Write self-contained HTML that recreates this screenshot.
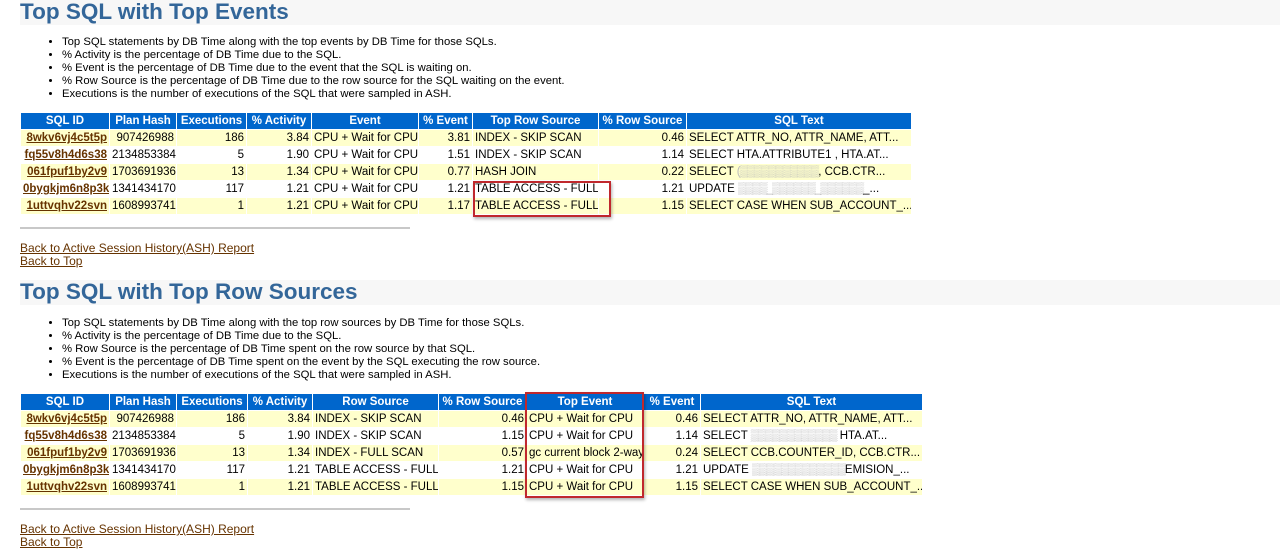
<!DOCTYPE html>
<html><head><meta charset="utf-8"><style>
body{margin:0;width:1280px;height:548px;background:#fff;font-family:"Liberation Sans",Arial,sans-serif;position:relative;overflow:hidden;color:#000}
.title{position:absolute;left:20px;width:1260px;height:25px;background:#f7f7f7;color:#336699;font-weight:bold;font-size:22.5px;line-height:24px}
ul{position:absolute;left:46px;margin:0;padding:0 0 0 16px;font-size:11.3px;line-height:13px;list-style:disc}
table{position:absolute;left:20px;border-collapse:separate;border-spacing:1px;font-size:11.5px;table-layout:fixed}
th{background:#0066cc;color:#fff;font-weight:bold;height:16px;padding:0 2px;white-space:nowrap;overflow:hidden;line-height:16px}
td{height:16px;padding:0 2px;white-space:nowrap;overflow:hidden;line-height:16px}
tr.a td{background:#ffffcc}
tr.b td{background:#fff}
.r{text-align:right}.c{text-align:center}
a{color:#663300;text-decoration:underline;font-weight:bold}
.lnk{position:absolute;left:20px;font-size:12px;line-height:13px}
.lnk a{font-weight:normal;color:#663300}
hr{position:absolute;left:20px;width:390px;margin:0;border:0;border-top:2px solid #c8c8c8}
.box{position:absolute;border:2px solid #c0282d;box-shadow:1px 2px 3px rgba(0,0,0,.3)}
.blur{color:#bbb;letter-spacing:-1px}
</style></head><body>
<div class="title" style="top:0">Top SQL with Top Events</div>
<ul style="top:36px">
<li>Top SQL statements by DB Time along with the top events by DB Time for those SQLs.</li>
<li>% Activity is the percentage of DB Time due to the SQL.</li>
<li>% Event is the percentage of DB Time due to the event that the SQL is waiting on.</li>
<li>% Row Source is the percentage of DB Time due to the row source for the SQL waiting on the event.</li>
<li>Executions is the number of executions of the SQL that were sampled in ASH.</li>
</ul>
<table style="top:112px;width:892px">
<colgroup><col style="width:88px"><col style="width:66px"><col style="width:69px"><col style="width:64px"><col style="width:106px"><col style="width:53px"><col style="width:125px"><col style="width:87px"><col style="width:224px"></colgroup>
<tr><th>SQL ID</th><th>Plan Hash</th><th>Executions</th><th>% Activity</th><th>Event</th><th>% Event</th><th>Top Row Source</th><th>% Row Source</th><th>SQL Text</th></tr>
<tr class="a"><td class="r"><a>8wkv6vj4c5t5p</a></td><td class="r">907426988</td><td class="r">186</td><td class="r">3.84</td><td>CPU + Wait for CPU</td><td class="r">3.81</td><td>INDEX - SKIP SCAN</td><td class="r">0.46</td><td>SELECT ATTR_NO, ATTR_NAME, ATT...</td></tr>
<tr class="b"><td class="r"><a>fq55v8h4d6s38</a></td><td class="r">2134853384</td><td class="r">5</td><td class="r">1.90</td><td>CPU + Wait for CPU</td><td class="r">1.51</td><td>INDEX - SKIP SCAN</td><td class="r">1.14</td><td>SELECT HTA.ATTRIBUTE1 , HTA.AT...</td></tr>
<tr class="a"><td class="r"><a>061fpuf1by2v9</a></td><td class="r">1703691936</td><td class="r">13</td><td class="r">1.34</td><td>CPU + Wait for CPU</td><td class="r">0.77</td><td>HASH JOIN</td><td class="r">0.22</td><td>SELECT <span class="blur">(▒▒▒▒▒▒▒▒▒▒▒</span>, CCB.CTR...</td></tr>
<tr class="b"><td class="r"><a>0bygkjm6n8p3k</a></td><td class="r">1341434170</td><td class="r">117</td><td class="r">1.21</td><td>CPU + Wait for CPU</td><td class="r">1.21</td><td>TABLE ACCESS - FULL</td><td class="r">1.21</td><td>UPDATE <span class="blur">▒▒▒▒_▒▒▒▒▒▒_▒▒▒▒▒▒</span>_...</td></tr>
<tr class="a"><td class="r"><a>1uttvqhv22svn</a></td><td class="r">1608993741</td><td class="r">1</td><td class="r">1.21</td><td>CPU + Wait for CPU</td><td class="r">1.17</td><td>TABLE ACCESS - FULL</td><td class="r">1.15</td><td>SELECT CASE WHEN SUB_ACCOUNT_...</td></tr>
</table>
<div class="box" style="left:473px;top:181px;width:134px;height:32px"></div>
<hr style="top:227px">
<div class="lnk" style="top:242px"><a>Back to Active Session History(ASH) Report</a><br><a>Back to Top</a></div>

<div class="title" style="top:280px">Top SQL with Top Row Sources</div>
<ul style="top:317px">
<li>Top SQL statements by DB Time along with the top row sources by DB Time for those SQLs.</li>
<li>% Activity is the percentage of DB Time due to the SQL.</li>
<li>% Row Source is the percentage of DB Time spent on the row source by that SQL.</li>
<li>% Event is the percentage of DB Time spent on the event by the SQL executing the row source.</li>
<li>Executions is the number of executions of the SQL that were sampled in ASH.</li>
</ul>
<table style="top:393px;width:902px">
<colgroup><col style="width:88px"><col style="width:66px"><col style="width:70px"><col style="width:64px"><col style="width:125px"><col style="width:87px"><col style="width:116px"><col style="width:56px"><col style="width:221px"></colgroup>
<tr><th>SQL ID</th><th>Plan Hash</th><th>Executions</th><th>% Activity</th><th>Row Source</th><th>% Row Source</th><th>Top Event</th><th>% Event</th><th>SQL Text</th></tr>
<tr class="a"><td class="r"><a>8wkv6vj4c5t5p</a></td><td class="r">907426988</td><td class="r">186</td><td class="r">3.84</td><td>INDEX - SKIP SCAN</td><td class="r">0.46</td><td>CPU + Wait for CPU</td><td class="r">0.46</td><td>SELECT ATTR_NO, ATTR_NAME, ATT...</td></tr>
<tr class="b"><td class="r"><a>fq55v8h4d6s38</a></td><td class="r">2134853384</td><td class="r">5</td><td class="r">1.90</td><td>INDEX - SKIP SCAN</td><td class="r">1.15</td><td>CPU + Wait for CPU</td><td class="r">1.14</td><td>SELECT <span class="blur">▒▒▒▒▒▒▒▒▒▒▒▒</span> HTA.AT...</td></tr>
<tr class="a"><td class="r"><a>061fpuf1by2v9</a></td><td class="r">1703691936</td><td class="r">13</td><td class="r">1.34</td><td>INDEX - FULL SCAN</td><td class="r">0.57</td><td>gc current block 2-way</td><td class="r">0.24</td><td>SELECT CCB.COUNTER_ID, CCB.CTR...</td></tr>
<tr class="b"><td class="r"><a>0bygkjm6n8p3k</a></td><td class="r">1341434170</td><td class="r">117</td><td class="r">1.21</td><td>TABLE ACCESS - FULL</td><td class="r">1.21</td><td>CPU + Wait for CPU</td><td class="r">1.21</td><td>UPDATE <span class="blur">▒▒▒▒▒▒▒▒▒▒▒▒▒</span>EMISION_...</td></tr>
<tr class="a"><td class="r"><a>1uttvqhv22svn</a></td><td class="r">1608993741</td><td class="r">1</td><td class="r">1.21</td><td>TABLE ACCESS - FULL</td><td class="r">1.15</td><td>CPU + Wait for CPU</td><td class="r">1.15</td><td>SELECT CASE WHEN SUB_ACCOUNT_...</td></tr>
</table>
<div class="box" style="left:525px;top:392px;width:115px;height:102px"></div>
<hr style="top:508px">
<div class="lnk" style="top:523px"><a>Back to Active Session History(ASH) Report</a><br><a>Back to Top</a></div>
</body></html>
